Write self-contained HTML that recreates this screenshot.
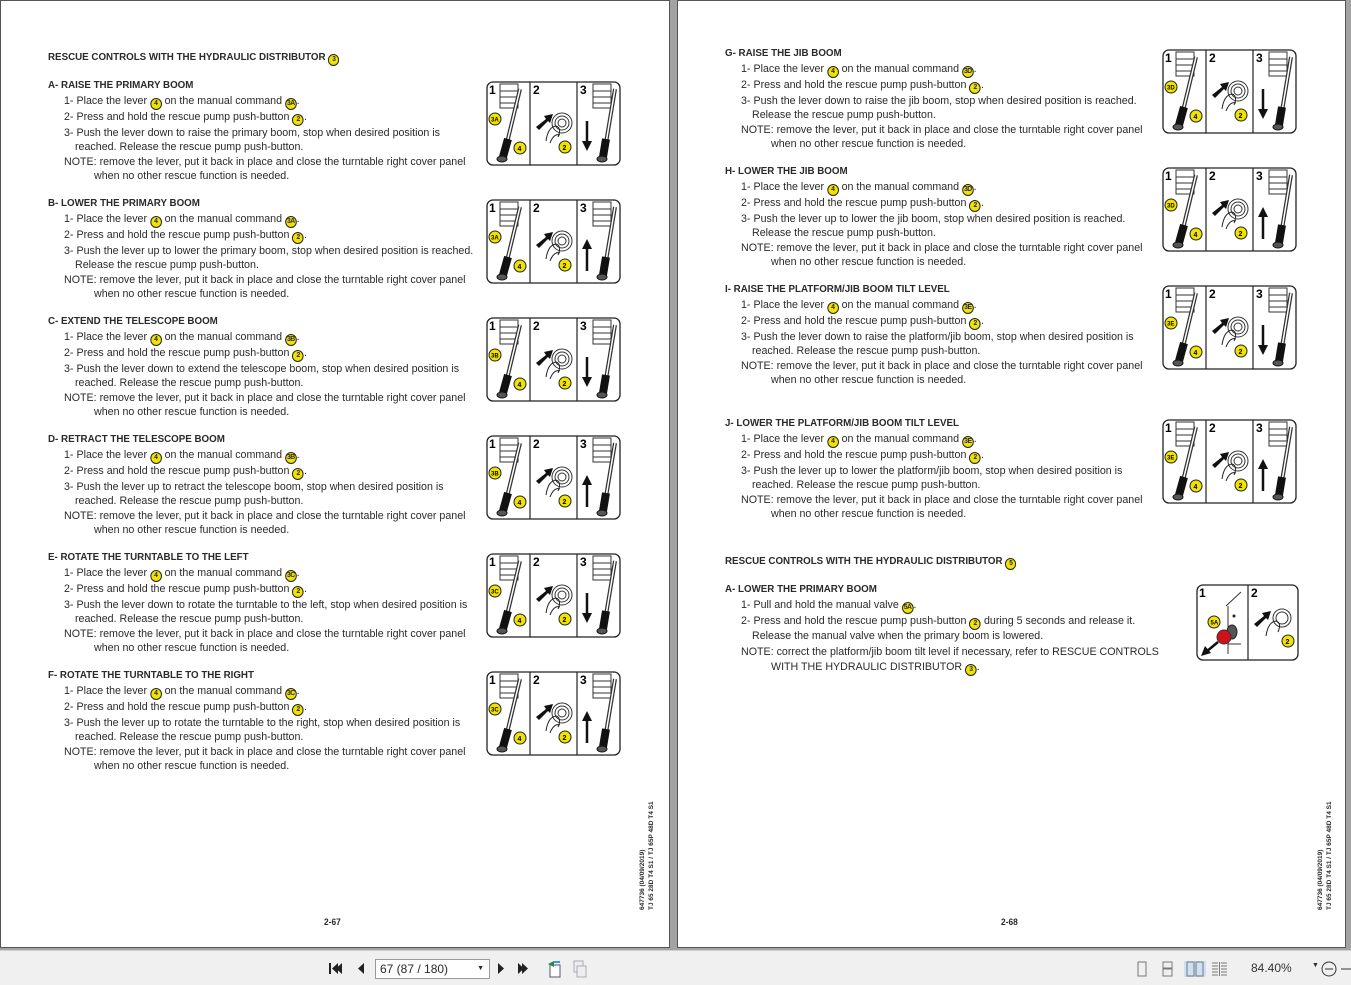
<!DOCTYPE html>
<html><head><meta charset="utf-8"><style>
*{margin:0;padding:0;box-sizing:border-box}
body{width:1351px;height:985px;background:#a3a3a3;position:relative;overflow:hidden;font-family:"Liberation Sans",sans-serif;color:#2a2a2a}
.pg{position:absolute;background:#fff;border:1px solid #555}
.t{position:absolute;white-space:nowrap;font-size:11px;line-height:14px;transform:scaleX(0.97);transform-origin:left center}
.h{font-weight:bold;font-size:10.5px;transform:scaleX(0.93)}
.c{display:inline-block;width:12px;height:12px;border-radius:50%;background:#f2e200;border:1px solid #222;font-size:7px;font-weight:bold;text-align:center;line-height:10px;vertical-align:-1px;letter-spacing:-0.5px}
svg.f{position:absolute}
.tb{position:absolute;left:0;top:950px;width:1351px;height:35px;background:#f0f0f0;border-top:1px solid #d0d0d0}
</style></head><body>
<svg width="0" height="0" style="position:absolute">
<defs>
<g id="base">
<rect x="1" y="1" width="133" height="83" rx="6" fill="#fff" stroke="#222" stroke-width="1.3"/>
<line x1="44" y1="1" x2="44" y2="84" stroke="#222" stroke-width="1.2"/>
<line x1="91" y1="1" x2="91" y2="84" stroke="#222" stroke-width="1.2"/>
<text x="3" y="13" font-size="12" font-weight="bold" font-family="Liberation Sans">1</text>
<text x="47" y="13" font-size="12" font-weight="bold" font-family="Liberation Sans">2</text>
<text x="94" y="13" font-size="12" font-weight="bold" font-family="Liberation Sans">3</text>
<rect x="14" y="3" width="18" height="24" fill="#fff" stroke="#333"/>
<line x1="14" y1="10" x2="32" y2="10" stroke="#333"/><line x1="14" y1="16" x2="32" y2="16" stroke="#333"/><line x1="14" y1="22" x2="32" y2="22" stroke="#333"/>
<line x1="34" y1="8" x2="21" y2="62" stroke="#333" stroke-width="4"/>
<line x1="34" y1="8" x2="21" y2="62" stroke="#fff" stroke-width="1.5"/>
<line x1="22" y1="58" x2="17" y2="76" stroke="#111" stroke-width="8"/>
<ellipse cx="16" cy="78" rx="5" ry="3" fill="#555" stroke="#111"/>
<circle cx="34" cy="67" r="6" fill="#f2e200" stroke="#222"/>
<text x="31.5" y="70" font-size="7" font-weight="bold" font-family="Liberation Sans">4</text>
<circle cx="9" cy="38" r="6" fill="#f2e200" stroke="#222"/>
<polygon points="50,46 60,38 58,35 67,33 64,42 62,40 53,49" fill="#111"/>
<circle cx="76" cy="42" r="10" fill="#fff" stroke="#333"/>
<circle cx="76" cy="42" r="7" fill="#fff" stroke="#333"/>
<circle cx="76" cy="42" r="4" fill="#fff" stroke="#333"/>
<path d="M60 60 Q62 46 70 45 Q76 47 72 56 M64 62 Q68 52 74 54" fill="none" stroke="#222"/>
<circle cx="79" cy="66" r="6" fill="#f2e200" stroke="#222"/>
<text x="76.5" y="69" font-size="7" font-weight="bold" font-family="Liberation Sans">2</text>
<rect x="107" y="3" width="18" height="24" fill="#fff" stroke="#333"/>
<line x1="107" y1="10" x2="125" y2="10" stroke="#333"/><line x1="107" y1="16" x2="125" y2="16" stroke="#333"/><line x1="107" y1="22" x2="125" y2="22" stroke="#333"/>
<line x1="129" y1="8" x2="120" y2="62" stroke="#333" stroke-width="4"/>
<line x1="129" y1="8" x2="120" y2="62" stroke="#fff" stroke-width="1.5"/>
<line x1="120" y1="58" x2="117" y2="76" stroke="#111" stroke-width="8"/>
<ellipse cx="116" cy="78" rx="5" ry="3" fill="#555" stroke="#111"/>
</g>
<g id="figD"><use href="#base"/><line x1="101" y1="40" x2="101" y2="62" stroke="#111" stroke-width="2.5"/><polygon points="96,60 106,60 101,70" fill="#111"/></g>
<g id="figU"><use href="#base"/><line x1="101" y1="48" x2="101" y2="72" stroke="#111" stroke-width="2.5"/><polygon points="96,50 106,50 101,40" fill="#111"/></g>
</defs></svg>

<div class="pg" style="left:0;top:0;width:670px;height:948px"></div>
<div class="pg" style="left:677px;top:0;width:669px;height:948px"></div>

<div class="t h" style="left:48px;top:50px">RESCUE CONTROLS WITH THE HYDRAULIC DISTRIBUTOR <span class="c">3</span></div>

<div class="t h" style="left:48px;top:78px">A- RAISE THE PRIMARY BOOM</div>
<div class="t" style="left:64px;top:94px">1- Place the lever <span class="c">4</span> on the manual command <span class="c">3A</span>.</div>
<div class="t" style="left:64px;top:110px">2- Press and hold the rescue pump push-button <span class="c">2</span>.</div>
<div class="t" style="left:64px;top:126px">3- Push the lever down to raise the primary boom, stop when desired position is</div>
<div class="t" style="left:75px;top:140px">reached. Release the rescue pump push-button.</div>
<div class="t" style="left:64px;top:155px">NOTE: remove the lever, put it back in place and close the turntable right cover panel</div>
<div class="t" style="left:94px;top:169px">when no other rescue function is needed.</div>
<svg class="f" style="left:486px;top:81px" width="135" height="85"><use href="#figD"/><text x="5" y="40.5" font-size="6" font-weight="bold" font-family="Liberation Sans">3A</text></svg>

<div class="t h" style="left:48px;top:196px">B- LOWER THE PRIMARY BOOM</div>
<div class="t" style="left:64px;top:212px">1- Place the lever <span class="c">4</span> on the manual command <span class="c">3A</span>.</div>
<div class="t" style="left:64px;top:228px">2- Press and hold the rescue pump push-button <span class="c">2</span>.</div>
<div class="t" style="left:64px;top:244px">3- Push the lever up to lower the primary boom, stop when desired position is reached.</div>
<div class="t" style="left:75px;top:258px">Release the rescue pump push-button.</div>
<div class="t" style="left:64px;top:273px">NOTE: remove the lever, put it back in place and close the turntable right cover panel</div>
<div class="t" style="left:94px;top:287px">when no other rescue function is needed.</div>
<svg class="f" style="left:486px;top:199px" width="135" height="85"><use href="#figU"/><text x="5" y="40.5" font-size="6" font-weight="bold" font-family="Liberation Sans">3A</text></svg>

<div class="t h" style="left:48px;top:314px">C- EXTEND THE TELESCOPE BOOM</div>
<div class="t" style="left:64px;top:330px">1- Place the lever <span class="c">4</span> on the manual command <span class="c">3B</span>.</div>
<div class="t" style="left:64px;top:346px">2- Press and hold the rescue pump push-button <span class="c">2</span>.</div>
<div class="t" style="left:64px;top:362px">3- Push the lever down to extend the telescope boom, stop when desired position is</div>
<div class="t" style="left:75px;top:376px">reached. Release the rescue pump push-button.</div>
<div class="t" style="left:64px;top:391px">NOTE: remove the lever, put it back in place and close the turntable right cover panel</div>
<div class="t" style="left:94px;top:405px">when no other rescue function is needed.</div>
<svg class="f" style="left:486px;top:317px" width="135" height="85"><use href="#figD"/><text x="5" y="40.5" font-size="6" font-weight="bold" font-family="Liberation Sans">3B</text></svg>

<div class="t h" style="left:48px;top:432px">D- RETRACT THE TELESCOPE BOOM</div>
<div class="t" style="left:64px;top:448px">1- Place the lever <span class="c">4</span> on the manual command <span class="c">3B</span>.</div>
<div class="t" style="left:64px;top:464px">2- Press and hold the rescue pump push-button <span class="c">2</span>.</div>
<div class="t" style="left:64px;top:480px">3- Push the lever up to retract the telescope boom, stop when desired position is</div>
<div class="t" style="left:75px;top:494px">reached. Release the rescue pump push-button.</div>
<div class="t" style="left:64px;top:509px">NOTE: remove the lever, put it back in place and close the turntable right cover panel</div>
<div class="t" style="left:94px;top:523px">when no other rescue function is needed.</div>
<svg class="f" style="left:486px;top:435px" width="135" height="85"><use href="#figU"/><text x="5" y="40.5" font-size="6" font-weight="bold" font-family="Liberation Sans">3B</text></svg>

<div class="t h" style="left:48px;top:550px">E- ROTATE THE TURNTABLE TO THE LEFT</div>
<div class="t" style="left:64px;top:566px">1- Place the lever <span class="c">4</span> on the manual command <span class="c">3C</span>.</div>
<div class="t" style="left:64px;top:582px">2- Press and hold the rescue pump push-button <span class="c">2</span>.</div>
<div class="t" style="left:64px;top:598px">3- Push the lever down to rotate the turntable to the left, stop when desired position is</div>
<div class="t" style="left:75px;top:612px">reached. Release the rescue pump push-button.</div>
<div class="t" style="left:64px;top:627px">NOTE: remove the lever, put it back in place and close the turntable right cover panel</div>
<div class="t" style="left:94px;top:641px">when no other rescue function is needed.</div>
<svg class="f" style="left:486px;top:553px" width="135" height="85"><use href="#figD"/><text x="5" y="40.5" font-size="6" font-weight="bold" font-family="Liberation Sans">3C</text></svg>

<div class="t h" style="left:48px;top:668px">F- ROTATE THE TURNTABLE TO THE RIGHT</div>
<div class="t" style="left:64px;top:684px">1- Place the lever <span class="c">4</span> on the manual command <span class="c">3C</span>.</div>
<div class="t" style="left:64px;top:700px">2- Press and hold the rescue pump push-button <span class="c">2</span>.</div>
<div class="t" style="left:64px;top:716px">3- Push the lever up to rotate the turntable to the right, stop when desired position is</div>
<div class="t" style="left:75px;top:730px">reached. Release the rescue pump push-button.</div>
<div class="t" style="left:64px;top:745px">NOTE: remove the lever, put it back in place and close the turntable right cover panel</div>
<div class="t" style="left:94px;top:759px">when no other rescue function is needed.</div>
<svg class="f" style="left:486px;top:671px" width="135" height="85"><use href="#figU"/><text x="5" y="40.5" font-size="6" font-weight="bold" font-family="Liberation Sans">3C</text></svg>

<div class="t h" style="left:324px;top:915px;font-size:9px">2-67</div>
<div style="position:absolute;left:638px;top:910px;transform:rotate(-90deg);transform-origin:left top;font-size:6.5px;line-height:9px;white-space:nowrap;font-weight:bold">647736 (04/09/2019)<br>TJ 65 28D T4 S1 / TJ 65P 48D T4 S1</div>

<div class="t h" style="left:725px;top:46px">G- RAISE THE JIB BOOM</div>
<div class="t" style="left:741px;top:62px">1- Place the lever <span class="c">4</span> on the manual command <span class="c">3D</span>.</div>
<div class="t" style="left:741px;top:78px">2- Press and hold the rescue pump push-button <span class="c">2</span>.</div>
<div class="t" style="left:741px;top:94px">3- Push the lever down to raise the jib boom, stop when desired position is reached.</div>
<div class="t" style="left:752px;top:108px">Release the rescue pump push-button.</div>
<div class="t" style="left:741px;top:123px">NOTE: remove the lever, put it back in place and close the turntable right cover panel</div>
<div class="t" style="left:771px;top:137px">when no other rescue function is needed.</div>
<svg class="f" style="left:1162px;top:49px" width="136" height="85"><use href="#figD"/><text x="5" y="40.5" font-size="6" font-weight="bold" font-family="Liberation Sans">3D</text></svg>

<div class="t h" style="left:725px;top:164px">H- LOWER THE JIB BOOM</div>
<div class="t" style="left:741px;top:180px">1- Place the lever <span class="c">4</span> on the manual command <span class="c">3D</span>.</div>
<div class="t" style="left:741px;top:196px">2- Press and hold the rescue pump push-button <span class="c">2</span>.</div>
<div class="t" style="left:741px;top:212px">3- Push the lever up to lower the jib boom, stop when desired position is reached.</div>
<div class="t" style="left:752px;top:226px">Release the rescue pump push-button.</div>
<div class="t" style="left:741px;top:241px">NOTE: remove the lever, put it back in place and close the turntable right cover panel</div>
<div class="t" style="left:771px;top:255px">when no other rescue function is needed.</div>
<svg class="f" style="left:1162px;top:167px" width="136" height="85"><use href="#figU"/><text x="5" y="40.5" font-size="6" font-weight="bold" font-family="Liberation Sans">3D</text></svg>

<div class="t h" style="left:725px;top:282px">I- RAISE THE PLATFORM/JIB BOOM TILT LEVEL</div>
<div class="t" style="left:741px;top:298px">1- Place the lever <span class="c">4</span> on the manual command <span class="c">3E</span>.</div>
<div class="t" style="left:741px;top:314px">2- Press and hold the rescue pump push-button <span class="c">2</span>.</div>
<div class="t" style="left:741px;top:330px">3- Push the lever down to raise the platform/jib boom, stop when desired position is</div>
<div class="t" style="left:752px;top:344px">reached. Release the rescue pump push-button.</div>
<div class="t" style="left:741px;top:359px">NOTE: remove the lever, put it back in place and close the turntable right cover panel</div>
<div class="t" style="left:771px;top:373px">when no other rescue function is needed.</div>
<svg class="f" style="left:1162px;top:285px" width="136" height="85"><use href="#figD"/><text x="5" y="40.5" font-size="6" font-weight="bold" font-family="Liberation Sans">3E</text></svg>

<div class="t h" style="left:725px;top:416px">J- LOWER THE PLATFORM/JIB BOOM TILT LEVEL</div>
<div class="t" style="left:741px;top:432px">1- Place the lever <span class="c">4</span> on the manual command <span class="c">3E</span>.</div>
<div class="t" style="left:741px;top:448px">2- Press and hold the rescue pump push-button <span class="c">2</span>.</div>
<div class="t" style="left:741px;top:464px">3- Push the lever up to lower the platform/jib boom, stop when desired position is</div>
<div class="t" style="left:752px;top:478px">reached. Release the rescue pump push-button.</div>
<div class="t" style="left:741px;top:493px">NOTE: remove the lever, put it back in place and close the turntable right cover panel</div>
<div class="t" style="left:771px;top:507px">when no other rescue function is needed.</div>
<svg class="f" style="left:1162px;top:419px" width="136" height="85"><use href="#figU"/><text x="5" y="40.5" font-size="6" font-weight="bold" font-family="Liberation Sans">3E</text></svg>

<div class="t h" style="left:725px;top:554px">RESCUE CONTROLS WITH THE HYDRAULIC DISTRIBUTOR <span class="c">5</span></div>
<div class="t h" style="left:725px;top:582px">A- LOWER THE PRIMARY BOOM</div>
<div class="t" style="left:741px;top:598px">1- Pull and hold the manual valve <span class="c">5A</span>.</div>
<div class="t" style="left:741px;top:614px">2- Press and hold the rescue pump push-button <span class="c">2</span> during 5 seconds and release it.</div>
<div class="t" style="left:752px;top:629px">Release the manual valve when the primary boom is lowered.</div>
<div class="t" style="left:741px;top:645px">NOTE: correct the platform/jib boom tilt level if necessary, refer to RESCUE CONTROLS</div>
<div class="t" style="left:771px;top:660px">WITH THE HYDRAULIC DISTRIBUTOR <span class="c">3</span>.</div>
<svg class="f" style="left:1196px;top:584px" width="103" height="77">
<rect x="1" y="1" width="101" height="75" rx="6" fill="#fff" stroke="#222" stroke-width="1.3"/>
<line x1="52" y1="1" x2="52" y2="76" stroke="#222" stroke-width="1.2"/>
<text x="3" y="13" font-size="12" font-weight="bold" font-family="Liberation Sans">1</text>
<text x="55" y="13" font-size="12" font-weight="bold" font-family="Liberation Sans">2</text>
<path d="M30 22 L45 8 M32 22 L32 70 M32 60 L45 60" fill="none" stroke="#333"/>
<circle cx="38" cy="32" r="1.5" fill="#222"/>
<ellipse cx="36" cy="48" rx="5" ry="7" fill="#555" stroke="#222"/>
<circle cx="28" cy="53" r="7" fill="#d0101a" stroke="#333"/>
<line x1="22" y1="58" x2="10" y2="68" stroke="#111" stroke-width="2.5"/>
<polygon points="5,72 9,62 15,69" fill="#111"/>
<circle cx="18" cy="38" r="6" fill="#f2e200" stroke="#222"/>
<text x="14.5" y="40.5" font-size="6" font-weight="bold" font-family="Liberation Sans">5A</text>
<polygon points="58,40 68,32 66,29 75,27 72,36 70,34 61,43" fill="#111"/>
<circle cx="86" cy="34" r="9" fill="#fff" stroke="#333"/>
<circle cx="86" cy="34" r="6" fill="#fff" stroke="#333"/>
<path d="M70 52 Q72 38 80 37 Q86 39 82 48" fill="none" stroke="#222"/>
<circle cx="92" cy="57" r="6" fill="#f2e200" stroke="#222"/>
<text x="89.5" y="60" font-size="7" font-weight="bold" font-family="Liberation Sans">2</text>
</svg>

<div class="t h" style="left:1001px;top:915px;font-size:9px">2-68</div>
<div style="position:absolute;left:1316px;top:910px;transform:rotate(-90deg);transform-origin:left top;font-size:6.5px;line-height:9px;white-space:nowrap;font-weight:bold">647736 (04/09/2019)<br>TJ 65 28D T4 S1 / TJ 65P 48D T4 S1</div>

<div class="tb">
<svg style="position:absolute;left:328px;top:10px" width="200" height="16">
<rect x="1" y="2" width="2" height="11" fill="#222"/><polygon points="10,2 4,7.5 10,13" fill="#222"/><polygon points="14,2 8,7.5 14,13" fill="#222"/>
<polygon points="36,2 30,7.5 36,13" fill="#222"/>
<polygon points="170,2 176,7.5 170,13" fill="#222"/>
<polygon points="194,2 200,7.5 194,13" fill="#222"/><polygon points="190,2 196,7.5 190,13" fill="#222"/>
</svg>
<div style="position:absolute;left:375px;top:8px;width:115px;height:20px;background:#fff;border:1px solid #999;font-size:12px;line-height:18px;padding-left:4px">67 (87 / 180)<span style="position:absolute;right:5px;font-size:7px">▼</span></div>
<svg style="position:absolute;left:546px;top:9px" width="44" height="18">
<rect x="4" y="5" width="10" height="12" fill="#fff" stroke="#557"/><path d="M2 4 L8 1 L8 7 Z" fill="#2a8a3a"/><rect x="8" y="1" width="6" height="2" fill="#39f"/>
<rect x="28" y="1" width="9" height="11" fill="#eee" stroke="#aab"/><rect x="31" y="6" width="9" height="11" fill="#eee" stroke="#aab"/>
</svg>
<svg style="position:absolute;left:1136px;top:10px" width="100" height="16">
<rect x="2" y="1" width="8" height="14" fill="none" stroke="#777"/>
<rect x="27" y="1" width="9" height="6" fill="none" stroke="#777"/><rect x="27" y="8" width="9" height="7" fill="none" stroke="#777"/>
<rect x="48" y="-2" width="22" height="20" fill="#cde0f5"/>
<rect x="51" y="1" width="7" height="14" fill="none" stroke="#777"/><rect x="60" y="1" width="7" height="14" fill="none" stroke="#777"/>
<path d="M76 2h6M76 5h6M76 8h6M76 11h6M76 14h6M85 2h6M85 5h6M85 8h6M85 11h6M85 14h6M83.5 1v14" stroke="#777" fill="none"/>
</svg>
<div style="position:absolute;left:1251px;top:10px;font-size:12px;color:#333">84.40%</div>
<div style="position:absolute;left:1312px;top:11px;font-size:7px">▼</div>
<svg style="position:absolute;left:1321px;top:9px" width="30" height="18"><circle cx="8" cy="9" r="7" fill="none" stroke="#333"/><line x1="4" y1="9" x2="12" y2="9" stroke="#333"/><line x1="20" y1="9" x2="30" y2="9" stroke="#333"/></svg>
</div>
</body></html>
